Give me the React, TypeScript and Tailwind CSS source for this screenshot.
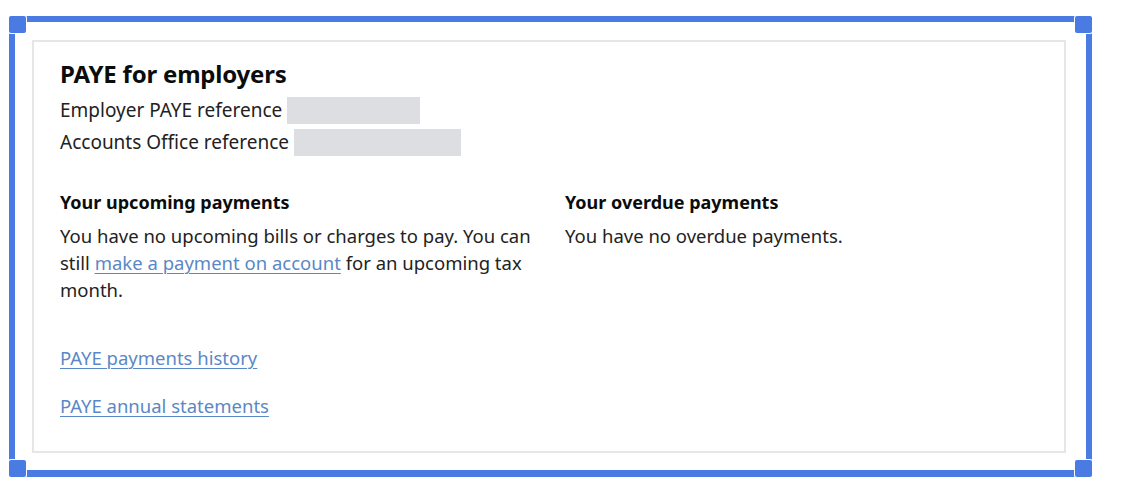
import React from 'react';

const Handle = ({ className }: { className: string }) => (
  <div className={`absolute w-[17px] h-[17px] rounded-[2px] bg-[#4a7be3] ring-1 ring-white ${className}`} />
);

export default function App() {
  return (
    <div className="w-[1136px] h-[490px] bg-white pt-[16px] pl-[9px] font-['Noto_Sans',sans-serif] text-[#0b0c0c]">
      <div className="relative w-[1083px] border-t-[6px] border-l-[6px] border-r-[6px] border-b-[7px] border-[#4a7be3] pt-[18px] pl-[17px] pr-[20px] pb-[17px]">
        <Handle className="-top-[6px] -left-[6px]" />
        <Handle className="-top-[6px] -right-[6px]" />
        <Handle className="-bottom-[7px] -left-[6px]" />
        <Handle className="-bottom-[7px] -right-[6px]" />

        <div className="border-2 border-[#e6e6e6] h-[413px] pt-[17px] px-[26px]">
          <h2 className="text-[24px] leading-[30px] font-bold tracking-[-0.2px]">PAYE for employers</h2>
          <div className="mt-[5px] flex items-center h-[32px] text-[19px] text-[#222]">
            <span>Employer PAYE reference</span>
            <span className="ml-[5px] w-[133px] h-[27px] bg-[#dcdee1]" />
          </div>
          <div className="flex items-center h-[32px] text-[19px] text-[#222]">
            <span>Accounts Office reference</span>
            <span className="ml-[5px] w-[167px] h-[27px] bg-[#dcdee1]" />
          </div>

          <div className="mt-[31px] grid grid-cols-[480px_1fr] gap-x-[25px] text-[18.5px] text-[#222]">
            <div>
              <h3 className="font-bold text-[18px] text-[#0b0c0c] leading-[27px]">Your upcoming payments</h3>
              <p className="mt-[6px] leading-[27px]">
                You have no upcoming bills or charges to pay. You can still{' '}
                <a href="#" className="text-[#5a88c6] underline underline-offset-[3px] decoration-1">make a payment on account</a>{' '}
                for an upcoming tax month.
              </p>
            </div>
            <div>
              <h3 className="font-bold text-[18px] text-[#0b0c0c] leading-[27px]">Your overdue payments</h3>
              <p className="mt-[6px] leading-[27px]">You have no overdue payments.</p>
            </div>
          </div>

          <div className="mt-[41px] flex flex-col gap-[21px] text-[18.5px] leading-[27px]">
            <a href="#" className="self-start text-[#5a88c6] underline underline-offset-[3px] decoration-1">PAYE payments history</a>
            <a href="#" className="self-start text-[#5a88c6] underline underline-offset-[3px] decoration-1">PAYE annual statements</a>
          </div>
        </div>
      </div>
    </div>
  );
}
